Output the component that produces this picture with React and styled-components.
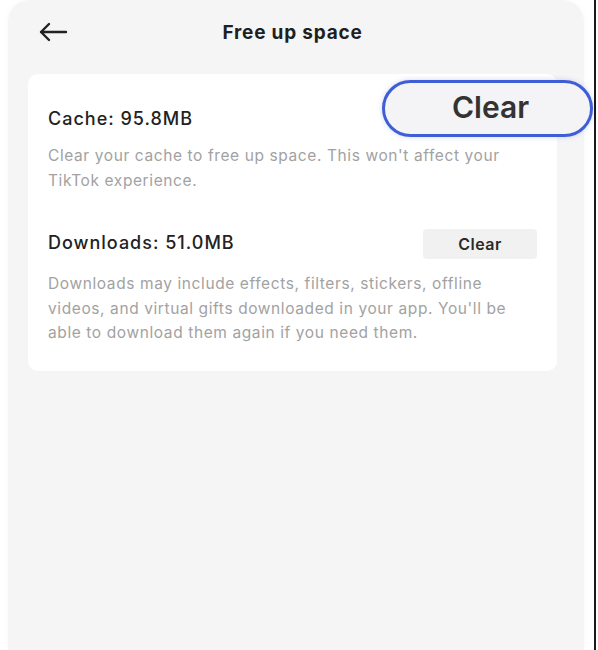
import React from "react";
import styled, { createGlobalStyle } from "styled-components";

const GlobalStyle = createGlobalStyle`
  html, body {
    margin: 0;
    padding: 0;
    background: #ffffff;
  }
  body {
    font-family: Inter, "Noto Sans", "Liberation Sans", sans-serif;
    -webkit-font-smoothing: antialiased;
  }
`;

const sections = [
  {
    id: "cache",
    title: "Cache: 95.8MB",
    text: "Clear your cache to free up space. This won't affect your TikTok experience.",
  },
  {
    id: "downloads",
    title: "Downloads: 51.0MB",
    text: "Downloads may include effects, filters, stickers, offline videos, and virtual gifts downloaded in your app. You'll be able to download them again if you need them.",
  },
];

export default function App() {
  return (
    <>
      <GlobalStyle />
      <Frame>
        <Screen>
          <Header>
            <BackButton aria-label="Back">
              <svg width="30" height="20" viewBox="0 0 30 20" fill="none">
                <path
                  d="M28 10H3M11 2L3 10L11 18"
                  stroke="#222"
                  strokeWidth="2.4"
                  strokeLinecap="round"
                  strokeLinejoin="round"
                />
              </svg>
            </BackButton>
            <Title>Free up space</Title>
          </Header>
          <Card>
            {sections.map((s) => (
              <Section key={s.id}>
                <Row>
                  <ItemTitle>{s.title}</ItemTitle>
                  {s.id === "downloads" && <ClearButton>Clear</ClearButton>}
                </Row>
                <Description>{s.text}</Description>
              </Section>
            ))}
            <Highlight>Clear</Highlight>
          </Card>
        </Screen>
      </Frame>
    </>
  );
}

const Frame = styled.div`
  width: 596px;
  height: 650px;
  border-right: 2px solid #1a1a1a;
  padding-left: 8px;
  box-sizing: border-box;
  display: flex;
  overflow: hidden;
`;

const Screen = styled.div`
  width: 576px;
  height: 100%;
  background: #f5f5f5;
  border-radius: 22px 22px 0 0;
  box-shadow: 0 0 6px rgba(0, 0, 0, 0.03);
  padding: 0 27px 0 20px;
  box-sizing: border-box;
  display: flex;
  flex-direction: column;
`;

const Header = styled.div`
  height: 64px;
  display: flex;
  align-items: center;
  justify-content: center;
  position: relative;
  margin-bottom: 10px;
`;

const BackButton = styled.button`
  position: absolute;
  left: 10px;
  top: 22px;
  border: none;
  background: none;
  padding: 0;
  display: flex;
`;

const Title = styled.h1`
  margin: 0;
  font-size: 19px;
  font-weight: 700;
  color: #1f1f1f;
  letter-spacing: 0.8px;
`;

const Card = styled.div`
  position: relative;
  background: #ffffff;
  border-radius: 10px;
  padding: 33px 20px 25px;
  display: flex;
  flex-direction: column;
  gap: 34px;
`;

const Section = styled.div`
  display: flex;
  flex-direction: column;
  gap: 13px;
`;

const Row = styled.div`
  display: flex;
  align-items: center;
  justify-content: space-between;
  min-height: 24px;
`;

const ItemTitle = styled.div`
  font-size: 18px;
  font-weight: 500;
  color: #222;
  line-height: 24px;
  letter-spacing: 1px;
`;

const Description = styled.p`
  margin: 0;
  font-size: 15.5px;
  line-height: 24.5px;
  letter-spacing: 0.6px;
  color: #a2a2a2;
  padding-right: 10px;
`;

const ClearButton = styled.button`
  width: 114px;
  height: 30px;
  border: none;
  border-radius: 4px;
  background: #f1f1f1;
  font-family: inherit;
  font-size: 16px;
  font-weight: 600;
  letter-spacing: 0.5px;
  color: #2a2a2a;
  margin-top: 2px;
`;

const Highlight = styled.button`
  position: absolute;
  left: 354px;
  top: 6px;
  width: 211px;
  height: 57px;
  box-sizing: border-box;
  border: 3px solid #3f5ed6;
  border-radius: 29px;
  background: #f4f4f6;
  box-shadow: 0 0 5px rgba(63, 94, 214, 0.25);
  font-family: inherit;
  font-size: 30px;
  font-weight: 600;
  color: #333;
  display: flex;
  align-items: center;
  justify-content: center;
  padding: 0 0 4px 6px;
`;
